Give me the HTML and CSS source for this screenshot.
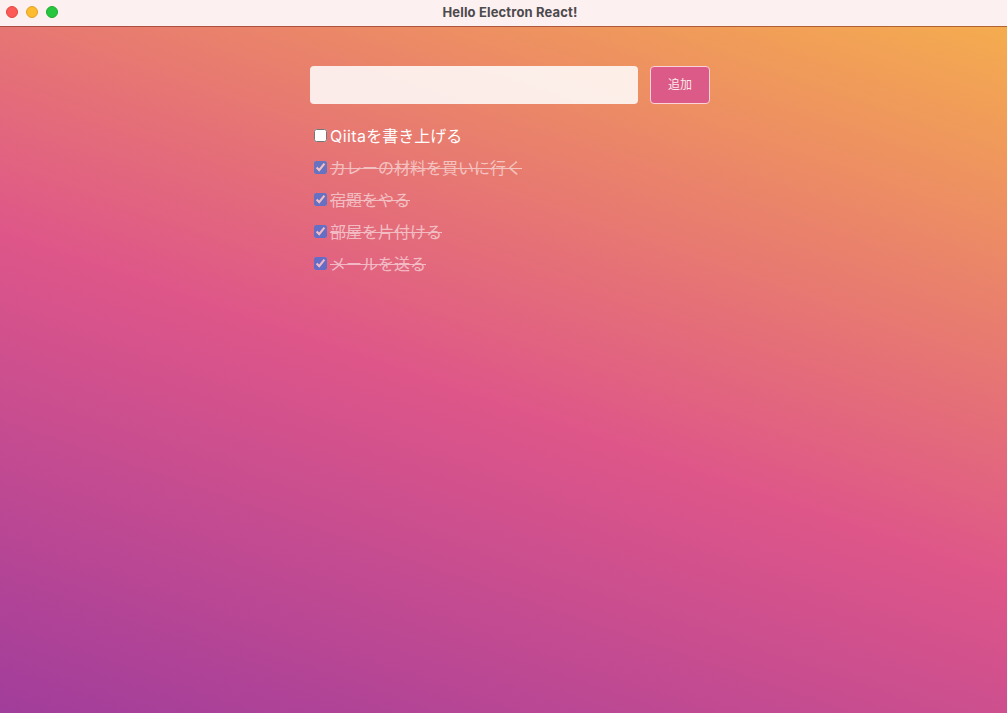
FILE: index.html
```html
<!DOCTYPE html>
<html lang="ja">
<head>
<meta charset="utf-8">
<title>Hello Electron React!</title>
<link rel="stylesheet" href="styles.css">
</head>
<body>
<div class="window">
  <header class="titlebar">
    <div class="lights">
      <span class="light light-close"></span>
      <span class="light light-min"></span>
      <span class="light light-max"></span>
    </div>
    <div class="title">Hello Electron React!</div>
  </header>
  <main class="app">
    <form class="add-form">
      <input class="add-input" type="text">
      <button class="add-button" type="button">追加</button>
    </form>
    <ul class="todo-list">
      <li class="todo"><input class="todo-check" type="checkbox"><span class="todo-text"><span class="latin">Qiita</span>を書き上げる</span></li>
      <li class="todo done"><input class="todo-check" type="checkbox" checked><span class="todo-text">カレーの材料を買いに行く</span></li>
      <li class="todo done"><input class="todo-check" type="checkbox" checked><span class="todo-text">宿題をやる</span></li>
      <li class="todo done"><input class="todo-check" type="checkbox" checked><span class="todo-text">部屋を片付ける</span></li>
      <li class="todo done"><input class="todo-check" type="checkbox" checked><span class="todo-text">メールを送る</span></li>
    </ul>
  </main>
</div>
</body>
</html>
```
FILE: styles.css
```css
html, body {
  margin: 0;
  height: 100%;
  overflow: hidden;
}
.window {
  width: 1020px;
  height: 713px;
  display: flex;
  flex-direction: column;
  font-family: "Inter", "Noto Sans CJK JP", sans-serif;
  background: linear-gradient(19deg, #a13d9b 0%, #de5689 45%, #f6b14b 100%);
}
.titlebar {
  position: relative;
  flex: none;
  height: 27px;
  box-sizing: border-box;
  display: flex;
  align-items: center;
  padding-left: 6px;
  background: #fdf0f0 padding-box;
  border-bottom: 1px solid rgba(120, 40, 30, 0.55);
}
.lights {
  display: flex;
  gap: 8px;
  margin-top: -2px;
}
.light {
  width: 12px;
  height: 12px;
  border-radius: 50%;
  box-sizing: border-box;
}
.light-close { background: #fc5a56; border: 1px solid #e2463f; }
.light-min { background: #fdbb2e; border: 1px solid #e1a12a; }
.light-max { background: #27c63f; border: 1px solid #1fab2f; }
.title {
  position: absolute;
  left: 0;
  right: 0;
  top: 4px;
  text-align: center;
  font-size: 13px;
  line-height: 16px;
  font-weight: 700;
  letter-spacing: 0.15px;
  color: #4c4a4c;
}
.app {
  flex: 1;
  width: 400px;
  margin: 0 auto;
  padding-top: 39px;
}
.add-form {
  display: flex;
  gap: 12px;
}
.add-input {
  flex: 1;
  min-width: 0;
  height: 38px;
  box-sizing: border-box;
  border: none;
  border-radius: 4px;
  background: rgba(255, 255, 255, 0.85);
}
.add-button {
  width: 60px;
  height: 38px;
  box-sizing: border-box;
  padding: 0 0 3px;
  border: 1px solid #fbd3d8;
  border-radius: 4px;
  background: #dc5a88;
  color: #fde9ea;
  font-family: "Noto Sans CJK JP", sans-serif;
  font-size: 12px;
}
.todo-list {
  list-style: none;
  margin: 15px 0 0;
  padding: 0 0 0 4px;
}
.todo {
  display: flex;
  align-items: center;
  height: 32px;
  font-size: 16px;
  color: #fff;
}
.todo-check {
  width: 13px;
  height: 13px;
  margin: 0 3px 0 0;
}
.todo-text {
  padding-bottom: 1px;
}
.latin {
  letter-spacing: 0.4px;
}
.done {
  opacity: 0.55;
}
.done .todo-text {
  text-decoration: line-through;
}
```
